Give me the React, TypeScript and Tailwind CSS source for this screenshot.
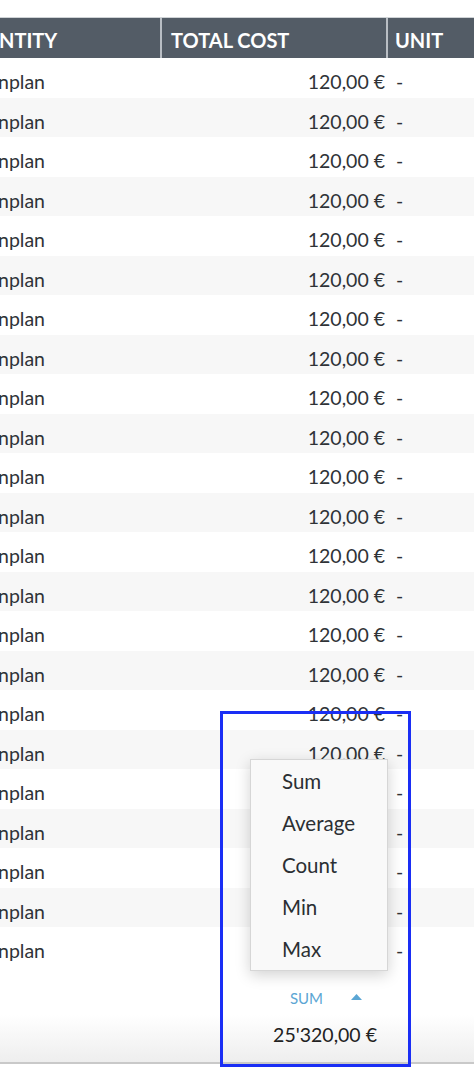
const rows = Array.from({ length: 23 }, (_, i) => i);

const menuItems = ["Sum", "Average", "Count", "Min", "Max"];

export default function App() {
  return (
    <div
      className="relative h-[1069px] w-[474px] overflow-hidden bg-white text-[#2f3337]"
      style={{ fontFamily: "Lato, 'Open Sans', sans-serif" }}
    >
      <div className="h-[17px]" />
      <div className="h-px bg-[#cfd3d6]" />

      {/* header */}
      <div className="grid h-[40px] grid-cols-[162px_226px_86px] bg-[#535c66] text-[20px] font-bold text-white">
        <div className="flex items-center overflow-hidden border-r-2 border-[#b9bec4] pt-[3px]">
          <span className="-ml-[1px]">NTITY</span>
        </div>
        <div className="flex items-center border-r-2 border-[#b9bec4] pl-[9px] pt-[3px]">
          TOTAL COST
        </div>
        <div className="flex items-center pl-[7px] pt-[3px]">UNIT</div>
      </div>

      {/* rows */}
      {rows.map((i) => (
        <div
          key={i}
          className={
            i % 2 === 0
              ? "grid h-[40px] grid-cols-[162px_226px_86px] bg-white text-[19.5px]"
              : "grid h-[39px] grid-cols-[162px_226px_86px] bg-[#f7f7f7] text-[19.5px]"
          }
        >
          <div className="flex items-center overflow-hidden pt-[8px]">
            <span className="-ml-[2px]">nplan</span>
          </div>
          <div className="flex items-center justify-end pr-[3px] pt-[8px]">120,00 €</div>
          <div className="flex items-center pl-[8px] pt-[8px]">-</div>
        </div>
      ))}

      {/* footer */}
      <div className="grid h-[97px] grid-cols-[162px_226px_86px] border-b-2 border-[#c9c9c9] bg-gradient-to-b from-white via-white to-[#eeeeee]">
        <div />
        <div className="flex flex-col items-end pt-[20px] pr-[11px]">
          <div className="flex items-center gap-[28px] pr-[15px] text-[15px] text-[#5ba6d4]">
            <span>SUM</span>
            <svg width="11" height="6" viewBox="0 0 11 6" className="mt-[-2px]">
              <path d="M0 6 L5.5 0 L11 6 Z" fill="#5ba6d4" />
            </svg>
          </div>
          <div className="mt-[10px] text-[19.5px] text-[#222]">25'320,00 €</div>
        </div>
        <div />
      </div>

      {/* aggregation menu */}
      <div className="absolute left-[250px] top-[759px] w-[138px] border border-[#d6d6d6] bg-[#f9f9f9] shadow-[0_4px_14px_rgba(0,0,0,0.18)]">
        {menuItems.map((m) => (
          <div key={m} className="flex h-[42px] items-center pl-[31px] text-[20.5px] text-[#2b2f33]">
            {m}
          </div>
        ))}
      </div>

      {/* highlight box */}
      <div className="pointer-events-none absolute left-[220px] top-[711px] h-[356px] w-[191px] border-[3px] border-[#1a2ef5]" />
    </div>
  );
}
